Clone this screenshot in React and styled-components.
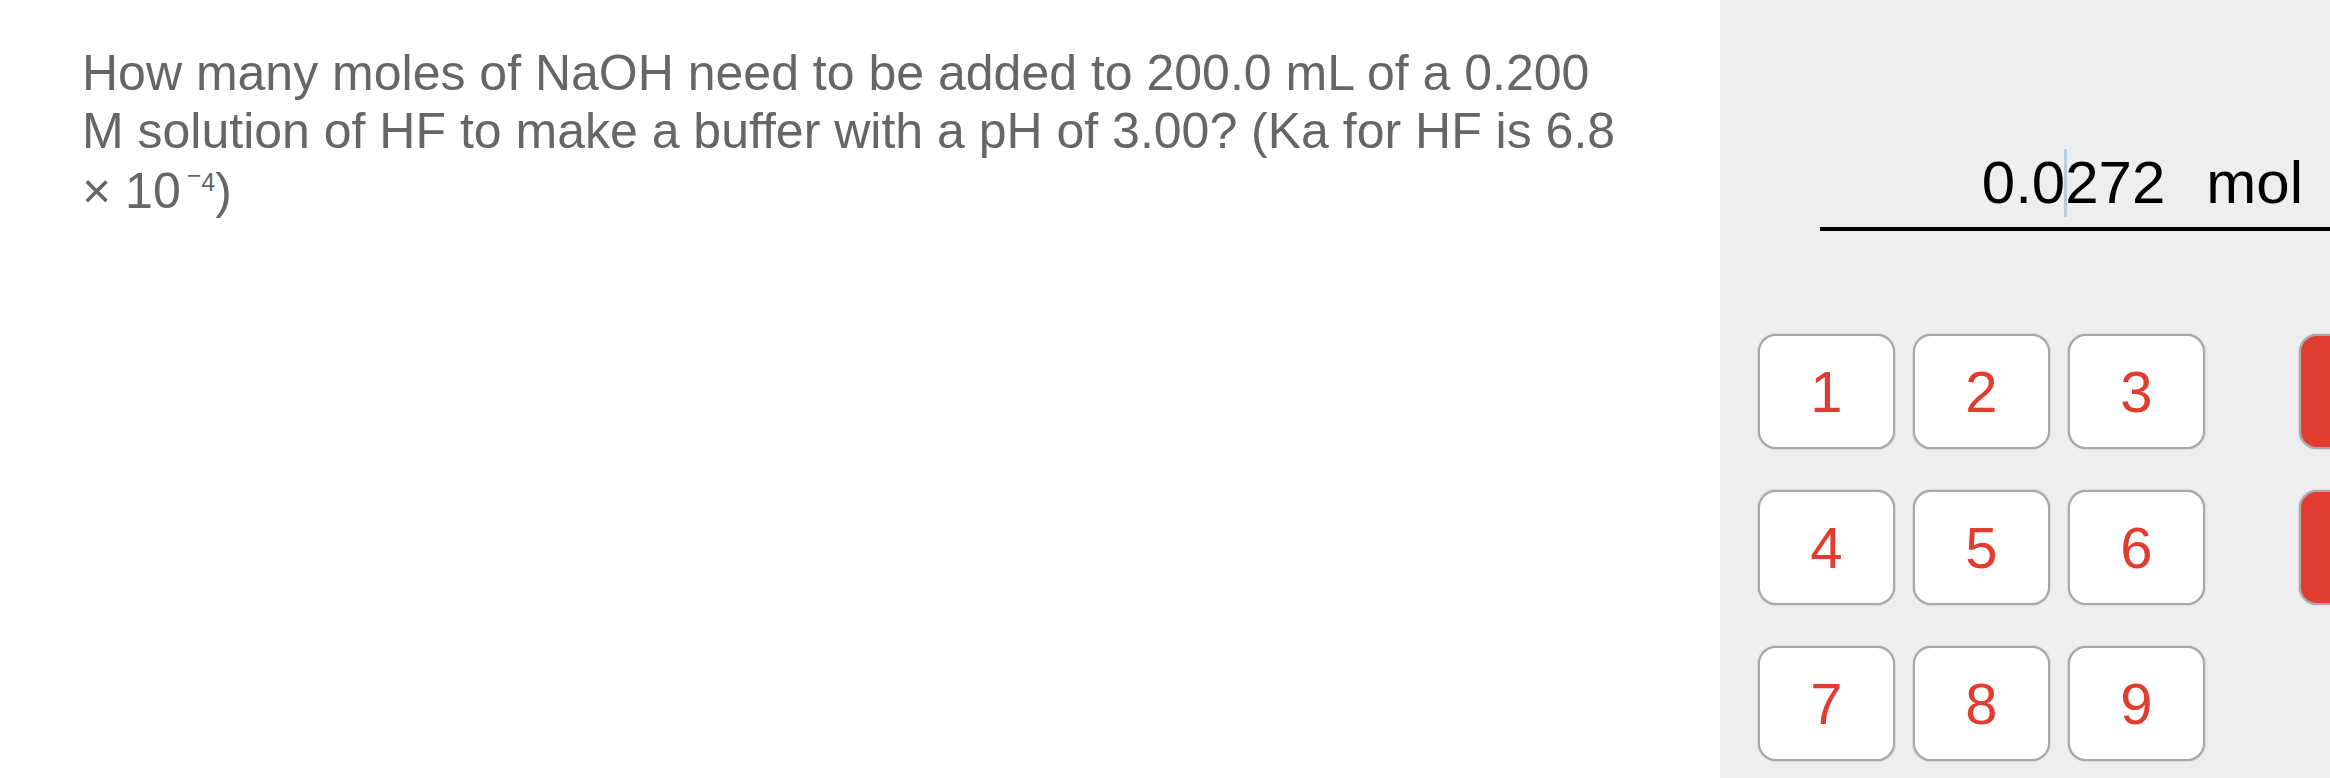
import React from "react";
import styled, { createGlobalStyle } from "styled-components";

const GlobalStyle = createGlobalStyle`
  html, body {
    margin: 0;
    padding: 0;
    background: #ffffff;
  }
  body {
    font-family: "Liberation Sans", Arial, Helvetica, sans-serif;
  }
`;

const Page = styled.div`
  display: grid;
  grid-template-columns: 1720px 1fr;
  width: 100vw;
  height: 100vh;
  overflow: hidden;
`;

const QuestionPane = styled.section`
  background: #ffffff;
  padding: 44px 0 0 82px;
`;

const Question = styled.p`
  margin: 0;
  width: 1550px;
  font-size: 50px;
  line-height: 58px;
  color: #666666;
`;

const ThirdLine = styled.span`
  display: inline-block;
  margin-top: 2px;
`;

const Sup = styled.span`
  display: inline-block;
  margin-left: 6px;
  font-size: 25px;
  line-height: 0;
  vertical-align: 17px;
`;

const SupMinus = styled.span`
  display: inline-block;
  vertical-align: 7px;
`;

const AnswerPane = styled.section`
  background: #eeeeee;
  padding: 148px 0 0 38px;
  overflow: hidden;
`;

const AnswerRow = styled.div`
  display: flex;
  justify-content: flex-end;
  align-items: baseline;
  margin-left: 62px;
  margin-right: -4px;
  padding: 0 31px 10px 0;
  border-bottom: 4px solid #000000;
  font-size: 60px;
  line-height: 69px;
  color: #000000;
`;

const Value = styled.span`
  white-space: nowrap;
`;

const Caret = styled.span`
  position: relative;
  display: inline-block;
  width: 0;
  &::after {
    content: "";
    position: absolute;
    left: -1px;
    top: -54px;
    width: 3px;
    height: 68px;
    background: #b7cde0;
  }
`;

const Unit = styled.span`
  margin-left: 41px;
`;

const Keypad = styled.div`
  display: flex;
  margin-top: 103px;
`;

const NumberGrid = styled.div`
  display: grid;
  grid-template-columns: repeat(3, 137px);
  grid-auto-rows: 115px;
  column-gap: 18px;
  row-gap: 41px;
`;

const SideColumn = styled.div`
  display: grid;
  grid-template-columns: 137px;
  grid-auto-rows: 115px;
  row-gap: 41px;
  margin-left: 94px;
`;

const Key = styled.button`
  box-sizing: border-box;
  display: flex;
  align-items: center;
  justify-content: center;
  padding: 0;
  border: 2px solid #a9a9a9;
  border-radius: 18px;
  box-shadow: 0 0 1.5px rgba(0, 0, 0, 0.4);
  background: ${(p) => (p.$accent ? "#e03c2f" : "#ffffff")};
  color: #e03c2f;
  font-family: "Liberation Sans", Arial, Helvetica, sans-serif;
  font-size: 58px;
  line-height: 1;
  cursor: pointer;
`;

const digits = ["1", "2", "3", "4", "5", "6", "7", "8", "9"];

export default function App() {
  return (
    <>
      <GlobalStyle />
      <Page>
        <QuestionPane>
          <Question>
            How many moles of NaOH need to be added to 200.0 mL of a 0.200 M
            solution of HF to make a buffer with a pH of 3.00? (Ka for HF is 6.8{" "}
            <ThirdLine>
              × 10
              <Sup>
                <SupMinus>−</SupMinus>4
              </Sup>
              )
            </ThirdLine>
          </Question>
        </QuestionPane>
        <AnswerPane>
          <AnswerRow>
            <Value>
              0.0
              <Caret />
              272
            </Value>
            <Unit>mol</Unit>
          </AnswerRow>
          <Keypad>
            <NumberGrid>
              {digits.map((d) => (
                <Key key={d}>{d}</Key>
              ))}
            </NumberGrid>
            <SideColumn>
              <Key $accent aria-label="clear" />
              <Key $accent aria-label="backspace" />
            </SideColumn>
          </Keypad>
        </AnswerPane>
      </Page>
    </>
  );
}
